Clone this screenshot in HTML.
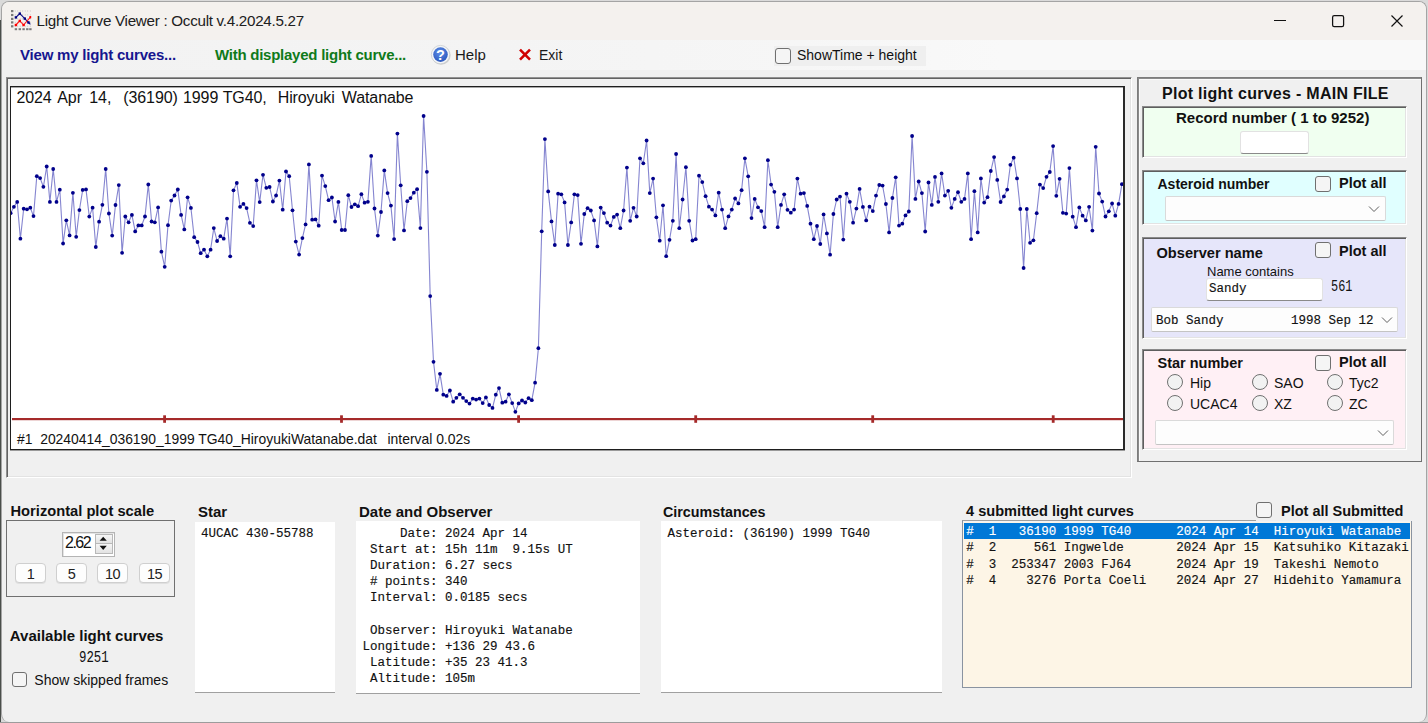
<!DOCTYPE html>
<html><head><meta charset="utf-8"><style>
html,body{margin:0;padding:0;width:1428px;height:723px;overflow:hidden;background:#2a2e2a}
.r{position:absolute}
.t{position:absolute;white-space:pre}
</style></head><body>
<div class="r" style="left:0px;top:0px;width:1428px;height:723px;background:#dadada"></div>
<div class="r" style="left:0px;top:20px;width:1px;height:703px;background:#4a4e4a"></div>
<div class="r" style="left:0px;top:722px;width:1428px;height:1px;background:#9c9c9c"></div>
<div class="r" style="left:1px;top:1px;width:1426px;height:721px;background:#f0f0f0;border-radius:8px 8px 8px 8px;overflow:hidden;box-sizing:border-box;border:1px solid #a4a4a4;border-bottom:none"><div class="r" style="left:0;top:0;width:1426px;height:38px;background:#f4f1ee"></div><div class="r" style="left:0;top:38px;width:1426px;height:30px;background:linear-gradient(90deg,#f2f2f2 0px,#f4f4f4 500px,#f6f6f6 800px,#f9f9f9 1000px,#f9f9f9 1426px)"></div></div>
<div class="t" style="left:36.5px;top:13.33px;font:normal 15.2px/15.2px 'Liberation Sans', sans-serif;color:#202020;letter-spacing:-0.28px;">Light Curve Viewer : Occult v.4.2024.5.27</div>
<svg class="r" style="left:6px;top:6px" width="30" height="28" viewBox="0 0 30 28">
<g fill="#c8c8c8"><rect x="8.8" y="4.5" width="1" height="1"/><rect x="11.1" y="4.5" width="1" height="1"/><rect x="13.8" y="4.5" width="1" height="1"/><rect x="16.1" y="4.5" width="1" height="1"/><rect x="18.8" y="4.5" width="1" height="1"/><rect x="21.1" y="4.5" width="1" height="1"/><rect x="23.9" y="4.5" width="1" height="1"/><rect x="8.8" y="8.4" width="1" height="1"/><rect x="11.1" y="8.4" width="1" height="1"/><rect x="13.8" y="8.4" width="1" height="1"/><rect x="16.1" y="8.4" width="1" height="1"/><rect x="18.8" y="8.4" width="1" height="1"/><rect x="21.1" y="8.4" width="1" height="1"/><rect x="23.9" y="8.4" width="1" height="1"/><rect x="8.8" y="12.3" width="1" height="1"/><rect x="11.1" y="12.3" width="1" height="1"/><rect x="13.8" y="12.3" width="1" height="1"/><rect x="16.1" y="12.3" width="1" height="1"/><rect x="18.8" y="12.3" width="1" height="1"/><rect x="21.1" y="12.3" width="1" height="1"/><rect x="23.9" y="12.3" width="1" height="1"/><rect x="8.8" y="15.8" width="1" height="1"/><rect x="11.1" y="15.8" width="1" height="1"/><rect x="13.8" y="15.8" width="1" height="1"/><rect x="16.1" y="15.8" width="1" height="1"/><rect x="18.8" y="15.8" width="1" height="1"/><rect x="21.1" y="15.8" width="1" height="1"/><rect x="23.9" y="15.8" width="1" height="1"/><rect x="8.8" y="19.7" width="1" height="1"/><rect x="11.1" y="19.7" width="1" height="1"/><rect x="13.8" y="19.7" width="1" height="1"/><rect x="16.1" y="19.7" width="1" height="1"/><rect x="18.8" y="19.7" width="1" height="1"/><rect x="21.1" y="19.7" width="1" height="1"/><rect x="23.9" y="19.7" width="1" height="1"/></g>
<g fill="#7a7a7a"><rect x="5" y="4.0" width="2.4" height="2.2"/><rect x="5" y="7.9" width="2.4" height="2.2"/><rect x="5" y="11.8" width="2.4" height="2.2"/><rect x="5" y="15.3" width="2.4" height="2.2"/><rect x="5" y="19.2" width="2.4" height="2.2"/><rect x="8.7" y="22.2" width="2.4" height="2"/><rect x="12.6" y="22.2" width="2.4" height="2"/><rect x="16.4" y="22.2" width="2.4" height="2"/><rect x="20.1" y="22.2" width="2.4" height="2"/><rect x="23.2" y="22.2" width="2.4" height="2"/></g>
<polyline points="9.9,11.4 13.8,7.6 18.8,12.6 22.5,16.5 24.4,18.4" fill="none" stroke="#101088" stroke-width="1.1"/>
<polyline points="9.9,19 13.8,14.9 17.6,19 24.4,11.2" fill="none" stroke="#ff2020" stroke-width="1.1"/>
<g fill="#000080"><rect x="8.7" y="10.2" width="2.4" height="2.4"/><rect x="12.6" y="6.4" width="2.4" height="2.4"/><rect x="17.6" y="11.4" width="2.4" height="2.4"/><rect x="21.3" y="15.3" width="2.4" height="2.4"/></g>
<g fill="#ff0000"><rect x="8.7" y="17.8" width="2.4" height="2.4"/><rect x="12.6" y="13.7" width="2.4" height="2.4"/><rect x="16.4" y="17.8" width="2.4" height="2.4"/><rect x="23.4" y="10" width="1.8" height="2.4"/></g>
</svg>
<div class="r" style="left:1274px;top:20px;width:12px;height:1.3000000000000007px;background:#111"></div>
<svg class="r" style="left:1331px;top:14px" width="14" height="14" viewBox="0 0 14 14"><rect x="1.6" y="1.6" width="11" height="11" rx="1.6" fill="none" stroke="#111" stroke-width="1.25"/></svg>
<svg class="r" style="left:1391px;top:15px" width="12" height="12" viewBox="0 0 12 12"><path d="M0.5 0.5 L11.5 11.5 M11.5 0.5 L0.5 11.5" stroke="#111" stroke-width="1.15"/></svg>
<div class="t" style="left:20px;top:46.90px;font:bold 15px/15px 'Liberation Sans', sans-serif;color:#16168f;letter-spacing:-0.2px;">View my light curves...</div>
<div class="t" style="left:215px;top:46.90px;font:bold 15px/15px 'Liberation Sans', sans-serif;color:#0f7a1a;letter-spacing:-0.25px;">With displayed light curve...</div>
<svg class="r" style="left:430px;top:44px" width="22" height="22" viewBox="0 0 22 22">
<defs><radialGradient id="hg" cx="0.45" cy="0.35" r="0.75"><stop offset="0" stop-color="#5f8fe8"/><stop offset="1" stop-color="#2450b8"/></radialGradient></defs>
<circle cx="11.2" cy="11.4" r="9.4" fill="#b8b8b8" opacity="0.6"/>
<circle cx="10.5" cy="10.6" r="9.2" fill="#f4f6f8" stroke="#c4c8cc" stroke-width="0.7"/>
<circle cx="10.5" cy="10.6" r="7.3" fill="url(#hg)"/>
<text x="10.5" y="15.6" text-anchor="middle" font-family="Liberation Sans" font-weight="bold" font-size="14.5" fill="#fff">?</text>
</svg>
<div class="t" style="left:455px;top:47.30px;font:normal 15px/15px 'Liberation Sans', sans-serif;color:#1a1a1a;letter-spacing:0px;">Help</div>
<svg class="r" style="left:518px;top:48px" width="14" height="13" viewBox="0 0 14 13"><path d="M2 1.6 L12 11.6 M12 1.6 L2 11.6" stroke="#d00000" stroke-width="2.6"/></svg>
<div class="t" style="left:539px;top:48.15px;font:normal 14px/14px 'Liberation Sans', sans-serif;color:#1a1a1a;letter-spacing:0px;">Exit</div>
<div class="r" style="left:774px;top:46px;width:152px;height:20px;background:#efefef"></div>
<div class="r" style="left:775px;top:48px;width:14px;height:14px;border:1px solid #707070;border-radius:3px;background:#f5f5f5"></div>
<div class="t" style="left:797px;top:47.55px;font:normal 14px/14px 'Liberation Sans', sans-serif;color:#111;letter-spacing:0px;">ShowTime + height</div>
<div class="r" style="left:6px;top:77px;width:1126px;height:401px;border-top:1px solid #909090;border-left:1px solid #909090;border-right:1px solid #fff;border-bottom:1px solid #fff;box-shadow:inset 1px 1px 0 #626262, inset -1px -1px 0 #e3e3e3;box-sizing:border-box"></div>
<div class="r" style="left:10px;top:86px;width:1115px;height:364px;background:#fff;border:1px solid #1e1e1e;border-right:2px solid #2a2a2a;box-shadow:0 1px 0 #9a9a9a, inset 0 1px 0 #a8a8a8;box-sizing:border-box"></div>
<div class="t" style="left:16.4px;top:90.06px;font:normal 16px/16px 'Liberation Sans', sans-serif;color:#111;letter-spacing:-0.1px;">2024</div>
<div class="t" style="left:57.3px;top:90.06px;font:normal 16px/16px 'Liberation Sans', sans-serif;color:#111;letter-spacing:-0.1px;">Apr</div>
<div class="t" style="left:89.3px;top:90.06px;font:normal 16px/16px 'Liberation Sans', sans-serif;color:#111;letter-spacing:-0.1px;">14,</div>
<div class="t" style="left:123.3px;top:90.06px;font:normal 16px/16px 'Liberation Sans', sans-serif;color:#111;letter-spacing:-0.1px;">(36190)</div>
<div class="t" style="left:183px;top:90.06px;font:normal 16px/16px 'Liberation Sans', sans-serif;color:#111;letter-spacing:-0.1px;">1999</div>
<div class="t" style="left:222.7px;top:90.06px;font:normal 16px/16px 'Liberation Sans', sans-serif;color:#111;letter-spacing:-0.1px;">TG40,</div>
<div class="t" style="left:277.7px;top:90.06px;font:normal 16px/16px 'Liberation Sans', sans-serif;color:#111;letter-spacing:-0.1px;">Hiroyuki</div>
<div class="t" style="left:341.8px;top:90.06px;font:normal 16px/16px 'Liberation Sans', sans-serif;color:#111;letter-spacing:-0.1px;">Watanabe</div>
<div class="t" style="left:17px;top:433.23px;font:normal 13.9px/13.9px 'Liberation Sans', sans-serif;color:#111;letter-spacing:0px;">#1&nbsp; 20240414_036190_1999 TG40_HiroyukiWatanabe.dat</div>
<div class="t" style="left:387.5px;top:433.23px;font:normal 13.9px/13.9px 'Liberation Sans', sans-serif;color:#111;letter-spacing:0px;">interval 0.02s</div>
<svg class="r" style="left:0;top:0" width="1428" height="723" viewBox="0 0 1428 723">
<defs><clipPath id="pc"><rect x="11" y="87" width="1112" height="362"/></clipPath></defs>
<g clip-path="url(#pc)">
<rect x="12" y="418" width="1111" height="2.2" fill="#a52a2a"/>
<g fill="#a52a2a"><rect x="163.2" y="415.3" width="2.8" height="7.5"/><rect x="340.1" y="415.3" width="2.8" height="7.5"/><rect x="517.2" y="415.3" width="2.8" height="7.5"/><rect x="694.3" y="415.3" width="2.8" height="7.5"/><rect x="871.3" y="415.3" width="2.8" height="7.5"/><rect x="1051.8" y="415.3" width="2.8" height="7.5"/></g>
<polyline points="10.6,213.2 13.9,206.8 17.2,201.9 20.4,238.7 23.7,208.7 27.0,209.3 30.3,207.7 33.5,216.1 36.8,176.2 40.1,178.1 43.4,186.8 46.7,166.5 49.9,201.9 53.2,169.0 56.5,201.9 59.8,189.7 63.1,243.5 66.3,220.3 69.6,235.4 72.9,192.8 76.2,236.8 79.4,210.1 82.7,189.9 86.0,189.4 89.3,216.6 92.6,207.7 95.8,247.0 99.1,221.7 102.4,204.8 105.7,169.0 108.9,213.5 112.2,235.6 115.5,205.0 118.8,185.1 122.1,252.8 125.3,216.5 128.6,222.3 131.9,214.9 135.2,231.4 138.4,225.4 141.7,225.4 145.0,216.5 148.3,184.5 151.6,221.5 154.8,222.3 158.1,207.4 161.4,251.7 164.7,266.8 168.0,225.2 171.2,200.6 174.5,195.5 177.8,189.5 181.1,214.9 184.3,229.4 187.6,197.3 190.9,207.9 194.2,237.2 197.5,242.0 200.7,253.2 204.0,249.7 207.3,256.3 210.6,249.7 213.8,228.1 217.1,241.0 220.4,236.2 223.7,238.7 227.0,218.6 230.2,256.3 233.5,190.3 236.8,183.0 240.1,206.8 243.4,203.9 246.6,208.1 249.9,222.8 253.2,226.1 256.5,180.3 259.7,202.1 263.0,174.8 266.3,187.8 269.6,187.0 272.9,201.5 276.1,195.5 279.4,180.6 282.7,209.7 286.0,171.4 289.2,176.2 292.5,210.3 295.8,241.6 299.1,254.6 302.4,238.1 305.6,224.4 308.9,164.4 312.2,219.7 315.5,219.4 318.7,225.7 322.0,175.6 325.3,186.1 328.6,200.2 331.9,197.5 335.1,221.5 338.4,201.9 341.7,230.0 345.0,230.0 348.3,195.2 351.5,207.0 354.8,204.3 358.1,206.2 361.4,194.2 364.6,202.7 367.9,201.8 371.2,155.9 374.5,208.5 377.8,235.6 381.0,212.0 384.3,170.4 387.6,193.1 390.9,205.6 394.1,239.1 397.4,133.6 400.7,185.3 404.0,230.4 407.3,201.2 410.5,198.1 413.8,192.7 417.1,189.2 420.4,228.1 423.6,116.0 426.9,171.8 430.2,296.1 433.5,361.8 436.8,389.9 440.0,373.8 443.3,394.7 446.6,395.9 449.9,390.5 453.2,401.7 456.4,397.8 459.7,394.3 463.0,397.8 466.3,401.1 469.5,403.6 472.8,398.6 476.1,399.6 479.4,398.6 482.7,403.1 485.9,397.4 489.2,405.0 492.5,407.9 495.8,394.7 499.0,388.1 502.3,402.7 505.6,401.7 508.9,394.3 512.2,403.1 515.4,411.8 518.7,403.4 522.0,400.5 525.3,402.5 528.6,398.2 531.8,400.2 535.1,382.7 538.4,348.2 541.7,231.3 544.9,139.1 548.2,191.4 551.5,221.4 554.8,245.0 558.1,193.7 561.3,194.3 564.6,202.4 567.9,245.0 571.2,222.4 574.4,194.3 577.7,195.1 581.0,243.8 584.3,214.0 587.6,208.2 590.8,210.5 594.1,220.4 597.4,246.4 600.7,207.6 603.9,213.1 607.2,222.7 610.5,225.6 613.8,216.9 617.1,214.6 620.3,228.2 623.6,210.5 626.9,167.6 630.2,220.8 633.5,207.8 636.7,216.5 640.0,158.3 643.3,163.3 646.6,140.5 649.8,193.1 653.1,178.6 656.4,217.3 659.7,240.7 663.0,205.3 666.2,256.2 669.5,239.8 672.8,220.8 676.1,154.0 679.3,228.2 682.6,199.5 685.9,167.2 689.2,220.8 692.5,240.5 695.7,239.2 699.0,175.7 702.3,182.1 705.6,196.2 708.9,206.7 712.1,209.6 715.4,215.4 718.7,192.7 722.0,209.6 725.2,228.2 728.5,216.4 731.8,209.6 735.1,198.5 738.4,203.4 741.6,190.2 744.9,158.3 748.2,176.3 751.5,218.1 754.7,198.9 758.0,207.3 761.3,211.1 764.6,227.2 767.9,160.2 771.1,184.6 774.4,191.8 777.7,227.2 781.0,204.9 784.2,194.3 787.5,209.8 790.8,212.7 794.1,209.6 797.4,178.6 800.6,193.7 803.9,193.1 807.2,205.9 810.5,223.7 813.8,239.2 817.0,226.0 820.3,244.0 823.6,214.4 826.9,233.4 830.1,254.7 833.4,214.0 836.7,199.5 840.0,196.6 843.3,239.6 846.5,193.7 849.8,201.8 853.1,222.7 856.4,208.6 859.6,188.9 862.9,206.9 866.2,220.4 869.5,206.7 872.8,211.1 876.0,195.6 879.3,185.0 882.6,185.6 885.9,204.0 889.1,232.4 892.4,198.0 895.7,177.3 899.0,225.6 902.3,223.7 905.5,215.4 908.8,211.5 912.1,136.0 915.4,198.9 918.7,181.5 921.9,193.1 925.2,231.5 928.5,182.5 931.8,204.9 935.0,176.9 938.3,201.8 941.6,173.4 944.9,195.6 948.2,190.8 951.4,207.8 954.7,198.9 958.0,192.2 961.3,201.8 964.5,198.9 967.8,173.4 971.1,239.2 974.4,191.2 977.7,232.4 980.9,178.4 984.2,202.6 987.5,197.2 990.8,171.0 994.1,157.1 997.3,179.9 1000.6,202.0 1003.9,196.4 1007.2,189.6 1010.4,164.8 1013.7,157.7 1017.0,178.4 1020.3,209.0 1023.6,268.0 1026.8,209.0 1030.1,242.8 1033.4,240.3 1036.7,213.2 1039.9,184.6 1043.2,188.1 1046.5,176.8 1049.8,172.0 1053.1,146.1 1056.3,195.8 1059.6,178.8 1062.9,212.8 1066.2,213.6 1069.4,168.1 1072.7,216.7 1076.0,227.2 1079.3,207.4 1082.6,215.7 1085.8,220.4 1089.1,206.8 1092.4,230.6 1095.7,146.8 1099.0,193.5 1102.2,201.6 1105.5,216.5 1108.8,211.3 1112.1,203.5 1115.3,215.7 1118.6,203.9 1121.9,184.2" fill="none" stroke="#7070c8" stroke-width="1.1" stroke-opacity="0.85"/>
<g fill="#00008b"><circle cx="10.6" cy="213.2" r="1.9"/><circle cx="13.9" cy="206.8" r="1.9"/><circle cx="17.2" cy="201.9" r="1.9"/><circle cx="20.4" cy="238.7" r="1.9"/><circle cx="23.7" cy="208.7" r="1.9"/><circle cx="27.0" cy="209.3" r="1.9"/><circle cx="30.3" cy="207.7" r="1.9"/><circle cx="33.5" cy="216.1" r="1.9"/><circle cx="36.8" cy="176.2" r="1.9"/><circle cx="40.1" cy="178.1" r="1.9"/><circle cx="43.4" cy="186.8" r="1.9"/><circle cx="46.7" cy="166.5" r="1.9"/><circle cx="49.9" cy="201.9" r="1.9"/><circle cx="53.2" cy="169.0" r="1.9"/><circle cx="56.5" cy="201.9" r="1.9"/><circle cx="59.8" cy="189.7" r="1.9"/><circle cx="63.1" cy="243.5" r="1.9"/><circle cx="66.3" cy="220.3" r="1.9"/><circle cx="69.6" cy="235.4" r="1.9"/><circle cx="72.9" cy="192.8" r="1.9"/><circle cx="76.2" cy="236.8" r="1.9"/><circle cx="79.4" cy="210.1" r="1.9"/><circle cx="82.7" cy="189.9" r="1.9"/><circle cx="86.0" cy="189.4" r="1.9"/><circle cx="89.3" cy="216.6" r="1.9"/><circle cx="92.6" cy="207.7" r="1.9"/><circle cx="95.8" cy="247.0" r="1.9"/><circle cx="99.1" cy="221.7" r="1.9"/><circle cx="102.4" cy="204.8" r="1.9"/><circle cx="105.7" cy="169.0" r="1.9"/><circle cx="108.9" cy="213.5" r="1.9"/><circle cx="112.2" cy="235.6" r="1.9"/><circle cx="115.5" cy="205.0" r="1.9"/><circle cx="118.8" cy="185.1" r="1.9"/><circle cx="122.1" cy="252.8" r="1.9"/><circle cx="125.3" cy="216.5" r="1.9"/><circle cx="128.6" cy="222.3" r="1.9"/><circle cx="131.9" cy="214.9" r="1.9"/><circle cx="135.2" cy="231.4" r="1.9"/><circle cx="138.4" cy="225.4" r="1.9"/><circle cx="141.7" cy="225.4" r="1.9"/><circle cx="145.0" cy="216.5" r="1.9"/><circle cx="148.3" cy="184.5" r="1.9"/><circle cx="151.6" cy="221.5" r="1.9"/><circle cx="154.8" cy="222.3" r="1.9"/><circle cx="158.1" cy="207.4" r="1.9"/><circle cx="161.4" cy="251.7" r="1.9"/><circle cx="164.7" cy="266.8" r="1.9"/><circle cx="168.0" cy="225.2" r="1.9"/><circle cx="171.2" cy="200.6" r="1.9"/><circle cx="174.5" cy="195.5" r="1.9"/><circle cx="177.8" cy="189.5" r="1.9"/><circle cx="181.1" cy="214.9" r="1.9"/><circle cx="184.3" cy="229.4" r="1.9"/><circle cx="187.6" cy="197.3" r="1.9"/><circle cx="190.9" cy="207.9" r="1.9"/><circle cx="194.2" cy="237.2" r="1.9"/><circle cx="197.5" cy="242.0" r="1.9"/><circle cx="200.7" cy="253.2" r="1.9"/><circle cx="204.0" cy="249.7" r="1.9"/><circle cx="207.3" cy="256.3" r="1.9"/><circle cx="210.6" cy="249.7" r="1.9"/><circle cx="213.8" cy="228.1" r="1.9"/><circle cx="217.1" cy="241.0" r="1.9"/><circle cx="220.4" cy="236.2" r="1.9"/><circle cx="223.7" cy="238.7" r="1.9"/><circle cx="227.0" cy="218.6" r="1.9"/><circle cx="230.2" cy="256.3" r="1.9"/><circle cx="233.5" cy="190.3" r="1.9"/><circle cx="236.8" cy="183.0" r="1.9"/><circle cx="240.1" cy="206.8" r="1.9"/><circle cx="243.4" cy="203.9" r="1.9"/><circle cx="246.6" cy="208.1" r="1.9"/><circle cx="249.9" cy="222.8" r="1.9"/><circle cx="253.2" cy="226.1" r="1.9"/><circle cx="256.5" cy="180.3" r="1.9"/><circle cx="259.7" cy="202.1" r="1.9"/><circle cx="263.0" cy="174.8" r="1.9"/><circle cx="266.3" cy="187.8" r="1.9"/><circle cx="269.6" cy="187.0" r="1.9"/><circle cx="272.9" cy="201.5" r="1.9"/><circle cx="276.1" cy="195.5" r="1.9"/><circle cx="279.4" cy="180.6" r="1.9"/><circle cx="282.7" cy="209.7" r="1.9"/><circle cx="286.0" cy="171.4" r="1.9"/><circle cx="289.2" cy="176.2" r="1.9"/><circle cx="292.5" cy="210.3" r="1.9"/><circle cx="295.8" cy="241.6" r="1.9"/><circle cx="299.1" cy="254.6" r="1.9"/><circle cx="302.4" cy="238.1" r="1.9"/><circle cx="305.6" cy="224.4" r="1.9"/><circle cx="308.9" cy="164.4" r="1.9"/><circle cx="312.2" cy="219.7" r="1.9"/><circle cx="315.5" cy="219.4" r="1.9"/><circle cx="318.7" cy="225.7" r="1.9"/><circle cx="322.0" cy="175.6" r="1.9"/><circle cx="325.3" cy="186.1" r="1.9"/><circle cx="328.6" cy="200.2" r="1.9"/><circle cx="331.9" cy="197.5" r="1.9"/><circle cx="335.1" cy="221.5" r="1.9"/><circle cx="338.4" cy="201.9" r="1.9"/><circle cx="341.7" cy="230.0" r="1.9"/><circle cx="345.0" cy="230.0" r="1.9"/><circle cx="348.3" cy="195.2" r="1.9"/><circle cx="351.5" cy="207.0" r="1.9"/><circle cx="354.8" cy="204.3" r="1.9"/><circle cx="358.1" cy="206.2" r="1.9"/><circle cx="361.4" cy="194.2" r="1.9"/><circle cx="364.6" cy="202.7" r="1.9"/><circle cx="367.9" cy="201.8" r="1.9"/><circle cx="371.2" cy="155.9" r="1.9"/><circle cx="374.5" cy="208.5" r="1.9"/><circle cx="377.8" cy="235.6" r="1.9"/><circle cx="381.0" cy="212.0" r="1.9"/><circle cx="384.3" cy="170.4" r="1.9"/><circle cx="387.6" cy="193.1" r="1.9"/><circle cx="390.9" cy="205.6" r="1.9"/><circle cx="394.1" cy="239.1" r="1.9"/><circle cx="397.4" cy="133.6" r="1.9"/><circle cx="400.7" cy="185.3" r="1.9"/><circle cx="404.0" cy="230.4" r="1.9"/><circle cx="407.3" cy="201.2" r="1.9"/><circle cx="410.5" cy="198.1" r="1.9"/><circle cx="413.8" cy="192.7" r="1.9"/><circle cx="417.1" cy="189.2" r="1.9"/><circle cx="420.4" cy="228.1" r="1.9"/><circle cx="423.6" cy="116.0" r="1.9"/><circle cx="426.9" cy="171.8" r="1.9"/><circle cx="430.2" cy="296.1" r="1.9"/><circle cx="433.5" cy="361.8" r="1.9"/><circle cx="436.8" cy="389.9" r="1.9"/><circle cx="440.0" cy="373.8" r="1.9"/><circle cx="443.3" cy="394.7" r="1.9"/><circle cx="446.6" cy="395.9" r="1.9"/><circle cx="449.9" cy="390.5" r="1.9"/><circle cx="453.2" cy="401.7" r="1.9"/><circle cx="456.4" cy="397.8" r="1.9"/><circle cx="459.7" cy="394.3" r="1.9"/><circle cx="463.0" cy="397.8" r="1.9"/><circle cx="466.3" cy="401.1" r="1.9"/><circle cx="469.5" cy="403.6" r="1.9"/><circle cx="472.8" cy="398.6" r="1.9"/><circle cx="476.1" cy="399.6" r="1.9"/><circle cx="479.4" cy="398.6" r="1.9"/><circle cx="482.7" cy="403.1" r="1.9"/><circle cx="485.9" cy="397.4" r="1.9"/><circle cx="489.2" cy="405.0" r="1.9"/><circle cx="492.5" cy="407.9" r="1.9"/><circle cx="495.8" cy="394.7" r="1.9"/><circle cx="499.0" cy="388.1" r="1.9"/><circle cx="502.3" cy="402.7" r="1.9"/><circle cx="505.6" cy="401.7" r="1.9"/><circle cx="508.9" cy="394.3" r="1.9"/><circle cx="512.2" cy="403.1" r="1.9"/><circle cx="515.4" cy="411.8" r="1.9"/><circle cx="518.7" cy="403.4" r="1.9"/><circle cx="522.0" cy="400.5" r="1.9"/><circle cx="525.3" cy="402.5" r="1.9"/><circle cx="528.6" cy="398.2" r="1.9"/><circle cx="531.8" cy="400.2" r="1.9"/><circle cx="535.1" cy="382.7" r="1.9"/><circle cx="538.4" cy="348.2" r="1.9"/><circle cx="541.7" cy="231.3" r="1.9"/><circle cx="544.9" cy="139.1" r="1.9"/><circle cx="548.2" cy="191.4" r="1.9"/><circle cx="551.5" cy="221.4" r="1.9"/><circle cx="554.8" cy="245.0" r="1.9"/><circle cx="558.1" cy="193.7" r="1.9"/><circle cx="561.3" cy="194.3" r="1.9"/><circle cx="564.6" cy="202.4" r="1.9"/><circle cx="567.9" cy="245.0" r="1.9"/><circle cx="571.2" cy="222.4" r="1.9"/><circle cx="574.4" cy="194.3" r="1.9"/><circle cx="577.7" cy="195.1" r="1.9"/><circle cx="581.0" cy="243.8" r="1.9"/><circle cx="584.3" cy="214.0" r="1.9"/><circle cx="587.6" cy="208.2" r="1.9"/><circle cx="590.8" cy="210.5" r="1.9"/><circle cx="594.1" cy="220.4" r="1.9"/><circle cx="597.4" cy="246.4" r="1.9"/><circle cx="600.7" cy="207.6" r="1.9"/><circle cx="603.9" cy="213.1" r="1.9"/><circle cx="607.2" cy="222.7" r="1.9"/><circle cx="610.5" cy="225.6" r="1.9"/><circle cx="613.8" cy="216.9" r="1.9"/><circle cx="617.1" cy="214.6" r="1.9"/><circle cx="620.3" cy="228.2" r="1.9"/><circle cx="623.6" cy="210.5" r="1.9"/><circle cx="626.9" cy="167.6" r="1.9"/><circle cx="630.2" cy="220.8" r="1.9"/><circle cx="633.5" cy="207.8" r="1.9"/><circle cx="636.7" cy="216.5" r="1.9"/><circle cx="640.0" cy="158.3" r="1.9"/><circle cx="643.3" cy="163.3" r="1.9"/><circle cx="646.6" cy="140.5" r="1.9"/><circle cx="649.8" cy="193.1" r="1.9"/><circle cx="653.1" cy="178.6" r="1.9"/><circle cx="656.4" cy="217.3" r="1.9"/><circle cx="659.7" cy="240.7" r="1.9"/><circle cx="663.0" cy="205.3" r="1.9"/><circle cx="666.2" cy="256.2" r="1.9"/><circle cx="669.5" cy="239.8" r="1.9"/><circle cx="672.8" cy="220.8" r="1.9"/><circle cx="676.1" cy="154.0" r="1.9"/><circle cx="679.3" cy="228.2" r="1.9"/><circle cx="682.6" cy="199.5" r="1.9"/><circle cx="685.9" cy="167.2" r="1.9"/><circle cx="689.2" cy="220.8" r="1.9"/><circle cx="692.5" cy="240.5" r="1.9"/><circle cx="695.7" cy="239.2" r="1.9"/><circle cx="699.0" cy="175.7" r="1.9"/><circle cx="702.3" cy="182.1" r="1.9"/><circle cx="705.6" cy="196.2" r="1.9"/><circle cx="708.9" cy="206.7" r="1.9"/><circle cx="712.1" cy="209.6" r="1.9"/><circle cx="715.4" cy="215.4" r="1.9"/><circle cx="718.7" cy="192.7" r="1.9"/><circle cx="722.0" cy="209.6" r="1.9"/><circle cx="725.2" cy="228.2" r="1.9"/><circle cx="728.5" cy="216.4" r="1.9"/><circle cx="731.8" cy="209.6" r="1.9"/><circle cx="735.1" cy="198.5" r="1.9"/><circle cx="738.4" cy="203.4" r="1.9"/><circle cx="741.6" cy="190.2" r="1.9"/><circle cx="744.9" cy="158.3" r="1.9"/><circle cx="748.2" cy="176.3" r="1.9"/><circle cx="751.5" cy="218.1" r="1.9"/><circle cx="754.7" cy="198.9" r="1.9"/><circle cx="758.0" cy="207.3" r="1.9"/><circle cx="761.3" cy="211.1" r="1.9"/><circle cx="764.6" cy="227.2" r="1.9"/><circle cx="767.9" cy="160.2" r="1.9"/><circle cx="771.1" cy="184.6" r="1.9"/><circle cx="774.4" cy="191.8" r="1.9"/><circle cx="777.7" cy="227.2" r="1.9"/><circle cx="781.0" cy="204.9" r="1.9"/><circle cx="784.2" cy="194.3" r="1.9"/><circle cx="787.5" cy="209.8" r="1.9"/><circle cx="790.8" cy="212.7" r="1.9"/><circle cx="794.1" cy="209.6" r="1.9"/><circle cx="797.4" cy="178.6" r="1.9"/><circle cx="800.6" cy="193.7" r="1.9"/><circle cx="803.9" cy="193.1" r="1.9"/><circle cx="807.2" cy="205.9" r="1.9"/><circle cx="810.5" cy="223.7" r="1.9"/><circle cx="813.8" cy="239.2" r="1.9"/><circle cx="817.0" cy="226.0" r="1.9"/><circle cx="820.3" cy="244.0" r="1.9"/><circle cx="823.6" cy="214.4" r="1.9"/><circle cx="826.9" cy="233.4" r="1.9"/><circle cx="830.1" cy="254.7" r="1.9"/><circle cx="833.4" cy="214.0" r="1.9"/><circle cx="836.7" cy="199.5" r="1.9"/><circle cx="840.0" cy="196.6" r="1.9"/><circle cx="843.3" cy="239.6" r="1.9"/><circle cx="846.5" cy="193.7" r="1.9"/><circle cx="849.8" cy="201.8" r="1.9"/><circle cx="853.1" cy="222.7" r="1.9"/><circle cx="856.4" cy="208.6" r="1.9"/><circle cx="859.6" cy="188.9" r="1.9"/><circle cx="862.9" cy="206.9" r="1.9"/><circle cx="866.2" cy="220.4" r="1.9"/><circle cx="869.5" cy="206.7" r="1.9"/><circle cx="872.8" cy="211.1" r="1.9"/><circle cx="876.0" cy="195.6" r="1.9"/><circle cx="879.3" cy="185.0" r="1.9"/><circle cx="882.6" cy="185.6" r="1.9"/><circle cx="885.9" cy="204.0" r="1.9"/><circle cx="889.1" cy="232.4" r="1.9"/><circle cx="892.4" cy="198.0" r="1.9"/><circle cx="895.7" cy="177.3" r="1.9"/><circle cx="899.0" cy="225.6" r="1.9"/><circle cx="902.3" cy="223.7" r="1.9"/><circle cx="905.5" cy="215.4" r="1.9"/><circle cx="908.8" cy="211.5" r="1.9"/><circle cx="912.1" cy="136.0" r="1.9"/><circle cx="915.4" cy="198.9" r="1.9"/><circle cx="918.7" cy="181.5" r="1.9"/><circle cx="921.9" cy="193.1" r="1.9"/><circle cx="925.2" cy="231.5" r="1.9"/><circle cx="928.5" cy="182.5" r="1.9"/><circle cx="931.8" cy="204.9" r="1.9"/><circle cx="935.0" cy="176.9" r="1.9"/><circle cx="938.3" cy="201.8" r="1.9"/><circle cx="941.6" cy="173.4" r="1.9"/><circle cx="944.9" cy="195.6" r="1.9"/><circle cx="948.2" cy="190.8" r="1.9"/><circle cx="951.4" cy="207.8" r="1.9"/><circle cx="954.7" cy="198.9" r="1.9"/><circle cx="958.0" cy="192.2" r="1.9"/><circle cx="961.3" cy="201.8" r="1.9"/><circle cx="964.5" cy="198.9" r="1.9"/><circle cx="967.8" cy="173.4" r="1.9"/><circle cx="971.1" cy="239.2" r="1.9"/><circle cx="974.4" cy="191.2" r="1.9"/><circle cx="977.7" cy="232.4" r="1.9"/><circle cx="980.9" cy="178.4" r="1.9"/><circle cx="984.2" cy="202.6" r="1.9"/><circle cx="987.5" cy="197.2" r="1.9"/><circle cx="990.8" cy="171.0" r="1.9"/><circle cx="994.1" cy="157.1" r="1.9"/><circle cx="997.3" cy="179.9" r="1.9"/><circle cx="1000.6" cy="202.0" r="1.9"/><circle cx="1003.9" cy="196.4" r="1.9"/><circle cx="1007.2" cy="189.6" r="1.9"/><circle cx="1010.4" cy="164.8" r="1.9"/><circle cx="1013.7" cy="157.7" r="1.9"/><circle cx="1017.0" cy="178.4" r="1.9"/><circle cx="1020.3" cy="209.0" r="1.9"/><circle cx="1023.6" cy="268.0" r="1.9"/><circle cx="1026.8" cy="209.0" r="1.9"/><circle cx="1030.1" cy="242.8" r="1.9"/><circle cx="1033.4" cy="240.3" r="1.9"/><circle cx="1036.7" cy="213.2" r="1.9"/><circle cx="1039.9" cy="184.6" r="1.9"/><circle cx="1043.2" cy="188.1" r="1.9"/><circle cx="1046.5" cy="176.8" r="1.9"/><circle cx="1049.8" cy="172.0" r="1.9"/><circle cx="1053.1" cy="146.1" r="1.9"/><circle cx="1056.3" cy="195.8" r="1.9"/><circle cx="1059.6" cy="178.8" r="1.9"/><circle cx="1062.9" cy="212.8" r="1.9"/><circle cx="1066.2" cy="213.6" r="1.9"/><circle cx="1069.4" cy="168.1" r="1.9"/><circle cx="1072.7" cy="216.7" r="1.9"/><circle cx="1076.0" cy="227.2" r="1.9"/><circle cx="1079.3" cy="207.4" r="1.9"/><circle cx="1082.6" cy="215.7" r="1.9"/><circle cx="1085.8" cy="220.4" r="1.9"/><circle cx="1089.1" cy="206.8" r="1.9"/><circle cx="1092.4" cy="230.6" r="1.9"/><circle cx="1095.7" cy="146.8" r="1.9"/><circle cx="1099.0" cy="193.5" r="1.9"/><circle cx="1102.2" cy="201.6" r="1.9"/><circle cx="1105.5" cy="216.5" r="1.9"/><circle cx="1108.8" cy="211.3" r="1.9"/><circle cx="1112.1" cy="203.5" r="1.9"/><circle cx="1115.3" cy="215.7" r="1.9"/><circle cx="1118.6" cy="203.9" r="1.9"/><circle cx="1121.9" cy="184.2" r="1.9"/></g>
</g></svg>
<div class="r" style="left:1137px;top:77px;width:285px;height:385px;border:1px solid #7c7c7c;border-right-color:#707070;border-bottom-color:#707070;box-shadow:inset 1px 1px 0 #8a8a8a, inset 2px 2px 0 #fafafa;box-sizing:border-box"></div>
<div class="t" style="left:1162px;top:86.46px;font:bold 16px/16px 'Liberation Sans', sans-serif;color:#111;letter-spacing:0.28px;">Plot light curves - MAIN FILE</div>
<div class="r" style="left:1142px;top:106px;width:265px;height:52px;background:#f0fff0;border-top:1px solid #8a8a8a;border-left:1px solid #8a8a8a;border-right:1px solid #fff;border-bottom:1px solid #fff;box-shadow:inset 1px 1px 0 #5e5e5e, inset -1px -1px 0 #e3e3e3;box-sizing:border-box"></div>
<div class="t" style="left:1176px;top:109.50px;font:bold 15px/15px 'Liberation Sans', sans-serif;color:#111;letter-spacing:0px;">Record number ( 1 to 9252)</div>
<div class="r" style="left:1240px;top:131px;width:69px;height:23px;background:#fff;border:1px solid #e2e2e2;border-bottom:1px solid #8a8a8a;border-radius:3px;box-sizing:border-box"></div>
<div class="r" style="left:1142px;top:170px;width:265px;height:55px;background:#e0ffff;border-top:1px solid #8a8a8a;border-left:1px solid #8a8a8a;border-right:1px solid #fff;border-bottom:1px solid #fff;box-shadow:inset 1px 1px 0 #5e5e5e, inset -1px -1px 0 #e3e3e3;box-sizing:border-box"></div>
<div class="t" style="left:1157.5px;top:176.85px;font:bold 14px/14px 'Liberation Sans', sans-serif;color:#111;letter-spacing:0px;">Asteroid number</div>
<div class="r" style="left:1315px;top:176px;width:14px;height:14px;border:1px solid #707070;border-radius:3px;background:#f5f5f5"></div>
<div class="t" style="left:1339px;top:176.43px;font:bold 14.5px/14.5px 'Liberation Sans', sans-serif;color:#111;letter-spacing:0px;">Plot all</div>
<div class="r" style="left:1165px;top:196px;width:221px;height:25px;background:#fdfdfd;border:1px solid #dadada;border-bottom-color:#c4c4c4;border-radius:2px;box-sizing:border-box"></div>
<svg class="r" style="left:1368px;top:205px" width="12" height="8" viewBox="0 0 12 8"><path d="M1 1.5 L6 6.5 L11 1.5" fill="none" stroke="#606060" stroke-width="1"/></svg>
<div class="r" style="left:1142px;top:237px;width:265px;height:102px;background:#e6e6fa;border-top:1px solid #8a8a8a;border-left:1px solid #8a8a8a;border-right:1px solid #fff;border-bottom:1px solid #fff;box-shadow:inset 1px 1px 0 #5e5e5e, inset -1px -1px 0 #e3e3e3;box-sizing:border-box"></div>
<div class="t" style="left:1156.5px;top:245.84px;font:bold 14.6px/14.6px 'Liberation Sans', sans-serif;color:#111;letter-spacing:0px;">Observer name</div>
<div class="r" style="left:1315px;top:242px;width:14px;height:14px;border:1px solid #707070;border-radius:3px;background:#f5f5f5"></div>
<div class="t" style="left:1339px;top:243.63px;font:bold 14.5px/14.5px 'Liberation Sans', sans-serif;color:#111;letter-spacing:0px;">Plot all</div>
<div class="t" style="left:1207px;top:264.50px;font:normal 13px/13px 'Liberation Sans', sans-serif;color:#111;letter-spacing:0px;">Name contains</div>
<div class="r" style="left:1206px;top:278px;width:117px;height:23px;background:#fff;border:1px solid #e2e2e2;border-bottom:1px solid #8a8a8a;border-radius:3px;box-sizing:border-box"></div>
<div class="t" style="left:1209px;top:283.42px;font:normal 12.5px/12.5px 'Liberation Mono', monospace;color:#111;letter-spacing:0px;-webkit-text-stroke:0.15px #111;">Sandy</div>
<div class="t" style="left:1331px;top:278.75px;font:normal 16.5px/16.5px 'Liberation Mono', monospace;color:#111;letter-spacing:0px;transform:scaleX(0.72);transform-origin:0 0">561</div>
<div class="r" style="left:1151px;top:307px;width:247px;height:25px;background:#fdfdfd;border:1px solid #dadada;border-bottom-color:#c4c4c4;border-radius:2px;box-sizing:border-box"></div>
<div class="t" style="left:1156px;top:315.02px;font:normal 12.5px/12.5px 'Liberation Mono', monospace;color:#111;letter-spacing:0px;-webkit-text-stroke:0.15px #111;">Bob Sandy&nbsp;&nbsp;&nbsp;&nbsp;&nbsp;&nbsp;&nbsp;&nbsp;&nbsp;1998 Sep 12</div>
<svg class="r" style="left:1381px;top:316px" width="12" height="8" viewBox="0 0 12 8"><path d="M1 1.5 L6 6.5 L11 1.5" fill="none" stroke="#606060" stroke-width="1"/></svg>
<div class="r" style="left:1142px;top:349px;width:265px;height:101px;background:#fff0f5;border-top:1px solid #8a8a8a;border-left:1px solid #8a8a8a;border-right:1px solid #fff;border-bottom:1px solid #fff;box-shadow:inset 1px 1px 0 #5e5e5e, inset -1px -1px 0 #e3e3e3;box-sizing:border-box"></div>
<div class="t" style="left:1157.5px;top:356.13px;font:bold 14.5px/14.5px 'Liberation Sans', sans-serif;color:#111;letter-spacing:0px;">Star number</div>
<div class="r" style="left:1315px;top:355px;width:14px;height:14px;border:1px solid #707070;border-radius:3px;background:#f5f5f5"></div>
<div class="t" style="left:1339px;top:354.73px;font:bold 14.5px/14.5px 'Liberation Sans', sans-serif;color:#111;letter-spacing:0px;">Plot all</div>
<div class="r" style="left:1167px;top:374px;width:14px;height:14px;border:1px solid #707070;border-radius:50%;background:#f2f2f2"></div>
<div class="t" style="left:1190px;top:375.85px;font:normal 14px/14px 'Liberation Sans', sans-serif;color:#111;letter-spacing:0px;">Hip</div>
<div class="r" style="left:1252px;top:374px;width:14px;height:14px;border:1px solid #707070;border-radius:50%;background:#f2f2f2"></div>
<div class="t" style="left:1274px;top:375.85px;font:normal 14px/14px 'Liberation Sans', sans-serif;color:#111;letter-spacing:0px;">SAO</div>
<div class="r" style="left:1327px;top:374px;width:14px;height:14px;border:1px solid #707070;border-radius:50%;background:#f2f2f2"></div>
<div class="t" style="left:1349px;top:375.85px;font:normal 14px/14px 'Liberation Sans', sans-serif;color:#111;letter-spacing:0px;">Tyc2</div>
<div class="r" style="left:1167px;top:395px;width:14px;height:14px;border:1px solid #707070;border-radius:50%;background:#f2f2f2"></div>
<div class="t" style="left:1190px;top:396.75px;font:normal 14px/14px 'Liberation Sans', sans-serif;color:#111;letter-spacing:0px;">UCAC4</div>
<div class="r" style="left:1252px;top:395px;width:14px;height:14px;border:1px solid #707070;border-radius:50%;background:#f2f2f2"></div>
<div class="t" style="left:1274px;top:396.75px;font:normal 14px/14px 'Liberation Sans', sans-serif;color:#111;letter-spacing:0px;">XZ</div>
<div class="r" style="left:1327px;top:395px;width:14px;height:14px;border:1px solid #707070;border-radius:50%;background:#f2f2f2"></div>
<div class="t" style="left:1349px;top:396.75px;font:normal 14px/14px 'Liberation Sans', sans-serif;color:#111;letter-spacing:0px;">ZC</div>
<div class="r" style="left:1155px;top:420px;width:239px;height:25px;background:#fdfdfd;border:1px solid #dadada;border-bottom-color:#c4c4c4;border-radius:2px;box-sizing:border-box"></div>
<svg class="r" style="left:1377px;top:429px" width="12" height="8" viewBox="0 0 12 8"><path d="M1 1.5 L6 6.5 L11 1.5" fill="none" stroke="#606060" stroke-width="1"/></svg>
<div class="t" style="left:10.5px;top:504.06px;font:bold 14.7px/14.7px 'Liberation Sans', sans-serif;color:#111;letter-spacing:0px;">Horizontal plot scale</div>
<div class="r" style="left:6px;top:520px;width:169px;height:77px;border:1px solid #707070;box-sizing:border-box"></div>
<div class="r" style="left:62px;top:532px;width:53px;height:25px;background:#fff;border:1px solid #b4b4b4;box-shadow:inset 1px 1px 0 #e4e4e4;box-sizing:border-box"></div>
<div class="t" style="left:65px;top:535.46px;font:normal 16px/16px 'Liberation Sans', sans-serif;color:#111;letter-spacing:-1.5px;">2.62</div>
<div class="r" style="left:95px;top:534px;width:18px;height:10px;background:linear-gradient(#f6f6f6,#e2e2e2);border:1px solid #b8b8b8;box-sizing:border-box"></div>
<div class="r" style="left:95px;top:544px;width:18px;height:10px;background:linear-gradient(#f6f6f6,#e2e2e2);border:1px solid #b8b8b8;border-top:none;box-sizing:border-box"></div>
<svg class="r" style="left:96px;top:534px" width="16" height="20" viewBox="0 0 16 20"><path d="M3.6 6.8 L7.2 2.8 L10.8 6.8 Z M3.6 11.8 L7.2 16 L10.8 11.8 Z" fill="#111"/></svg>
<div class="r" style="left:15px;top:563px;width:31px;height:20px;background:#fdfdfd;border:1px solid #cfcfcf;border-radius:4px;box-shadow:0 1px 0 #e0e0e0;box-sizing:border-box"></div>
<div class="t" style="left:30.5px;top:567.23px;font:normal 14.5px/14.5px 'Liberation Sans', sans-serif;color:#222;letter-spacing:-0.6px;transform:translateX(-50%)">1</div>
<div class="r" style="left:56px;top:563px;width:31px;height:20px;background:#fdfdfd;border:1px solid #cfcfcf;border-radius:4px;box-shadow:0 1px 0 #e0e0e0;box-sizing:border-box"></div>
<div class="t" style="left:71.5px;top:567.23px;font:normal 14.5px/14.5px 'Liberation Sans', sans-serif;color:#222;letter-spacing:-0.6px;transform:translateX(-50%)">5</div>
<div class="r" style="left:97px;top:563px;width:31px;height:20px;background:#fdfdfd;border:1px solid #cfcfcf;border-radius:4px;box-shadow:0 1px 0 #e0e0e0;box-sizing:border-box"></div>
<div class="t" style="left:112.5px;top:567.23px;font:normal 14.5px/14.5px 'Liberation Sans', sans-serif;color:#222;letter-spacing:-0.6px;transform:translateX(-50%)">10</div>
<div class="r" style="left:139px;top:563px;width:31px;height:20px;background:#fdfdfd;border:1px solid #cfcfcf;border-radius:4px;box-shadow:0 1px 0 #e0e0e0;box-sizing:border-box"></div>
<div class="t" style="left:154.5px;top:567.23px;font:normal 14.5px/14.5px 'Liberation Sans', sans-serif;color:#222;letter-spacing:-0.6px;transform:translateX(-50%)">15</div>
<div class="t" style="left:9.8px;top:628.00px;font:bold 15px/15px 'Liberation Sans', sans-serif;color:#111;letter-spacing:0px;">Available light curves</div>
<div class="t" style="left:78.7px;top:649.75px;font:normal 16.5px/16.5px 'Liberation Mono', monospace;color:#111;letter-spacing:0px;transform:scaleX(0.75);transform-origin:0 0">9251</div>
<div class="r" style="left:12px;top:672px;width:13px;height:13px;border:1px solid #707070;border-radius:3px;background:#f5f5f5"></div>
<div class="t" style="left:34.3px;top:672.65px;font:normal 14px/14px 'Liberation Sans', sans-serif;color:#111;letter-spacing:0px;">Show skipped frames</div>
<div class="t" style="left:198px;top:503.80px;font:bold 15px/15px 'Liberation Sans', sans-serif;color:#111;letter-spacing:0px;">Star</div>
<div class="r" style="left:195px;top:522px;width:140px;height:171px;background:#fff;border-bottom:1px solid #a0a0a0;box-sizing:border-box"></div>
<div class="t" style="left:201px;top:528.42px;font:normal 12.5px/12.5px 'Liberation Mono', monospace;color:#111;letter-spacing:0px;-webkit-text-stroke:0.15px #111;">4UCAC 430-55788</div>
<div class="t" style="left:359px;top:504.00px;font:bold 15px/15px 'Liberation Sans', sans-serif;color:#111;letter-spacing:0px;">Date and Observer</div>
<div class="r" style="left:356px;top:521px;width:284px;height:173px;background:#fff;border-bottom:1px solid #a0a0a0;box-sizing:border-box"></div>
<div class="t" style="left:362.6px;top:527.62px;font:normal 12.5px/12.5px 'Liberation Mono', monospace;color:#111;letter-spacing:0px;-webkit-text-stroke:0.15px #111;">&nbsp;&nbsp;&nbsp;&nbsp;&nbsp;Date:&nbsp;2024&nbsp;Apr&nbsp;14</div>
<div class="t" style="left:362.6px;top:543.81px;font:normal 12.5px/12.5px 'Liberation Mono', monospace;color:#111;letter-spacing:0px;-webkit-text-stroke:0.15px #111;">&nbsp;Start&nbsp;at:&nbsp;15h&nbsp;11m&nbsp;&nbsp;9.15s&nbsp;UT</div>
<div class="t" style="left:362.6px;top:560.00px;font:normal 12.5px/12.5px 'Liberation Mono', monospace;color:#111;letter-spacing:0px;-webkit-text-stroke:0.15px #111;">&nbsp;Duration:&nbsp;6.27&nbsp;secs</div>
<div class="t" style="left:362.6px;top:576.19px;font:normal 12.5px/12.5px 'Liberation Mono', monospace;color:#111;letter-spacing:0px;-webkit-text-stroke:0.15px #111;">&nbsp;#&nbsp;points:&nbsp;340</div>
<div class="t" style="left:362.6px;top:592.38px;font:normal 12.5px/12.5px 'Liberation Mono', monospace;color:#111;letter-spacing:0px;-webkit-text-stroke:0.15px #111;">&nbsp;Interval:&nbsp;0.0185&nbsp;secs</div>
<div class="t" style="left:362.6px;top:624.76px;font:normal 12.5px/12.5px 'Liberation Mono', monospace;color:#111;letter-spacing:0px;-webkit-text-stroke:0.15px #111;">&nbsp;Observer:&nbsp;Hiroyuki&nbsp;Watanabe</div>
<div class="t" style="left:362.6px;top:640.95px;font:normal 12.5px/12.5px 'Liberation Mono', monospace;color:#111;letter-spacing:0px;-webkit-text-stroke:0.15px #111;">Longitude:&nbsp;+136&nbsp;29&nbsp;43.6</div>
<div class="t" style="left:362.6px;top:657.14px;font:normal 12.5px/12.5px 'Liberation Mono', monospace;color:#111;letter-spacing:0px;-webkit-text-stroke:0.15px #111;">&nbsp;Latitude:&nbsp;+35&nbsp;23&nbsp;41.3</div>
<div class="t" style="left:362.6px;top:673.33px;font:normal 12.5px/12.5px 'Liberation Mono', monospace;color:#111;letter-spacing:0px;-webkit-text-stroke:0.15px #111;">&nbsp;Altitude:&nbsp;105m</div>
<div class="t" style="left:663px;top:504.60px;font:bold 14.3px/14.3px 'Liberation Sans', sans-serif;color:#111;letter-spacing:0px;">Circumstances</div>
<div class="r" style="left:661px;top:521px;width:281px;height:172px;background:#fff;border-bottom:1px solid #a0a0a0;box-sizing:border-box"></div>
<div class="t" style="left:667.4px;top:527.62px;font:normal 12.5px/12.5px 'Liberation Mono', monospace;color:#111;letter-spacing:0px;-webkit-text-stroke:0.15px #111;">Asteroid: (36190) 1999 TG40</div>
<div class="t" style="left:966px;top:504.44px;font:bold 14.6px/14.6px 'Liberation Sans', sans-serif;color:#111;letter-spacing:0px;">4 submitted light curves</div>
<div class="r" style="left:1256px;top:502px;width:14px;height:14px;border:1px solid #707070;border-radius:3px;background:#f5f5f5"></div>
<div class="t" style="left:1281px;top:503.73px;font:bold 14.5px/14.5px 'Liberation Sans', sans-serif;color:#111;letter-spacing:0px;">Plot all Submitted</div>
<div class="r" style="left:962px;top:520px;width:450px;height:168px;background:#fdf5e6;border:1px solid #8a93a0;border-top-color:#a0a0a0;box-shadow:inset 0 1px 0 #f4f4f4;box-sizing:border-box"></div>
<div class="r" style="left:1256px;top:519px;width:157px;height:2px;background:#f0f0f0"></div>
<div class="r" style="left:964px;top:523px;width:446px;height:16px;background:#0078d7"></div>
<div class="t" style="left:966.3px;top:526.12px;font:normal 12.5px/12.5px 'Liberation Mono', monospace;color:#fff;letter-spacing:0px;-webkit-text-stroke:0.15px #fff;">#&nbsp;&nbsp;1&nbsp;&nbsp;&nbsp;36190&nbsp;1999&nbsp;TG40&nbsp;&nbsp;&nbsp;&nbsp;&nbsp;&nbsp;2024&nbsp;Apr&nbsp;14&nbsp;&nbsp;Hiroyuki&nbsp;Watanabe</div>
<div class="t" style="left:966.3px;top:542.37px;font:normal 12.5px/12.5px 'Liberation Mono', monospace;color:#111;letter-spacing:0px;-webkit-text-stroke:0.15px #111;">#&nbsp;&nbsp;2&nbsp;&nbsp;&nbsp;&nbsp;&nbsp;561&nbsp;Ingwelde&nbsp;&nbsp;&nbsp;&nbsp;&nbsp;&nbsp;&nbsp;2024&nbsp;Apr&nbsp;15&nbsp;&nbsp;Katsuhiko&nbsp;Kitazaki</div>
<div class="t" style="left:966.3px;top:558.62px;font:normal 12.5px/12.5px 'Liberation Mono', monospace;color:#111;letter-spacing:0px;-webkit-text-stroke:0.15px #111;">#&nbsp;&nbsp;3&nbsp;&nbsp;253347&nbsp;2003&nbsp;FJ64&nbsp;&nbsp;&nbsp;&nbsp;&nbsp;&nbsp;2024&nbsp;Apr&nbsp;19&nbsp;&nbsp;Takeshi&nbsp;Nemoto</div>
<div class="t" style="left:966.3px;top:574.87px;font:normal 12.5px/12.5px 'Liberation Mono', monospace;color:#111;letter-spacing:0px;-webkit-text-stroke:0.15px #111;">#&nbsp;&nbsp;4&nbsp;&nbsp;&nbsp;&nbsp;3276&nbsp;Porta&nbsp;Coeli&nbsp;&nbsp;&nbsp;&nbsp;2024&nbsp;Apr&nbsp;27&nbsp;&nbsp;Hidehito&nbsp;Yamamura</div>
</body></html>
